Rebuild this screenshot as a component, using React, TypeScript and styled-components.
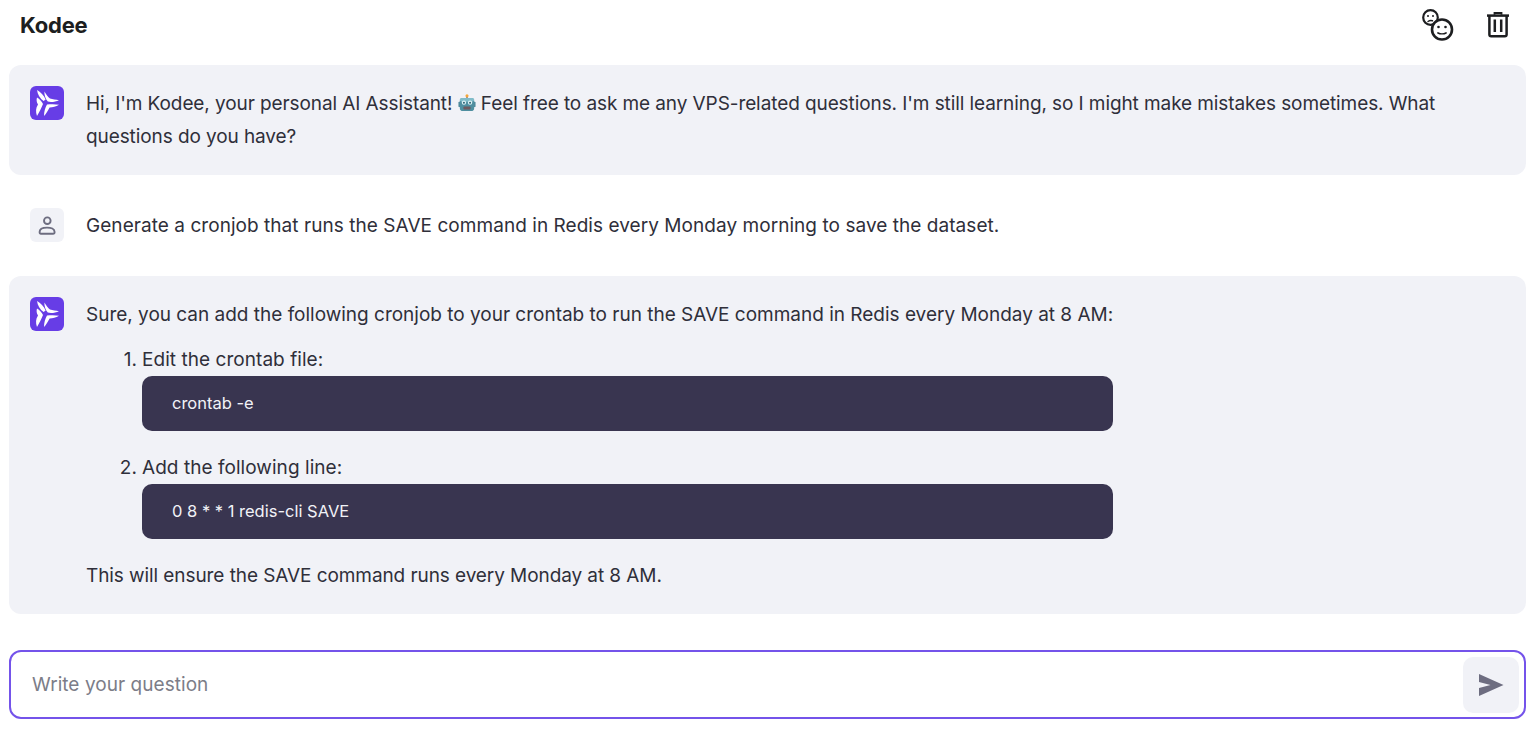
import React from "react";
import styled, { createGlobalStyle } from "styled-components";

const Global = createGlobalStyle`
  html, body { margin: 0; padding: 0; background: #fff; }
  body { font-family: "Inter", "Liberation Sans", sans-serif; color: #2f2f3a; }
`;
const Page = styled.div`
  width: 1536px; height: 734px; box-sizing: border-box; padding: 0 10px 0 9px;
  display: flex; flex-direction: column; overflow: hidden;
`;
const Header = styled.header`
  height: 65px; flex: none; box-sizing: border-box; padding: 9px 17px 15px 11px;
  display: flex; align-items: flex-start; justify-content: space-between;
`;
const Title = styled.h1`
  margin: 3px 0 0; font-size: 22px; font-weight: 700; color: #1d1e20; letter-spacing: -0.2px;
`;
const Actions = styled.div`
  display: flex; align-items: flex-start; gap: 33px; color: #1d1e20;
  & > svg:last-child { margin-top: 3px; }
`;
const Message = styled.section<{ $tinted?: boolean }>`
  display: flex; gap: 22px; align-items: flex-start; border-radius: 12px;
  padding: 21px 21px ${(p) => (p.$tinted ? "22px" : "21px")};
  background: ${(p) => (p.$tinted ? "#f1f2f7" : "transparent")};
`;
const Avatar = styled.div<{ $user?: boolean }>`
  width: 34px; height: 34px; flex: none; border-radius: 6px;
  display: flex; align-items: center; justify-content: center;
  background: ${(p) => (p.$user ? "#f1f2f7" : "#673de6")};
`;
const Body = styled.div`
  flex: 1; font-size: 19px; line-height: 33px; color: #2f2f3a; margin-top: 1px;
`;
const Para = styled.p<{ $tracking?: number }>`
  margin: 0; letter-spacing: ${(p) => p.$tracking ?? 0.05}px;
`;
const ClosingPara = styled(Para)`
  margin-top: 20px;
`;
const Steps = styled.ol`
  margin: 12px 0 0; padding: 0 0 0 56px; width: 971px; box-sizing: content-box;
  list-style: none; counter-reset: step;
`;
const Step = styled.li`
  position: relative; counter-increment: step; margin-bottom: 20px; letter-spacing: 0.05px;
  &:last-child { margin-bottom: 0; }
  &::before {
    content: counter(step) "."; position: absolute; right: 100%; margin-right: 5px;
  }
`;
const Code = styled.pre`
  margin: 0; height: 55px; box-sizing: border-box; padding: 0 30px; border-radius: 10px;
  display: flex; align-items: center;
  background: #393550; color: #f1f2f7; font-family: inherit; font-size: 16.5px; letter-spacing: 0;
`;
const Gap = styled.div<{ $h: number }>`
  height: ${(p) => p.$h}px; flex: none;
`;
const InputBox = styled.div`
  height: 69px; box-sizing: border-box; border: 2px solid #7453ea; border-radius: 12px;
  display: flex; align-items: center; justify-content: space-between; padding: 0 5px 0 21px;
`;
const Placeholder = styled.span`
  font-size: 19px; color: #7c7d88; letter-spacing: 0.05px;
`;
const Send = styled.button`
  width: 56px; height: 56px; border: 0; border-radius: 10px; background: #f1f2f7; padding: 0;
  display: flex; align-items: center; justify-content: center;
`;
const Inline = styled.svg`
  display: inline-block; vertical-align: -2px; margin: 0;
`;

const Logo = () => (
  <svg width="34" height="34" viewBox="0 0 34 34" fill="#fff">
    <path d="M7 4 C10.5 5.8 14 9.5 15.6 13.6 L13.6 15 C10 12.6 7.6 8.6 7 4Z" />
    <path d="M7 11.4 C9.6 13 12 15.5 13 18 C11.5 22 9 26.5 7 30 C5.6 26 5.6 22 8 18.6 C6.5 16 6.3 13.6 7 11.4Z" />
    <path d="M14.4 5.4 C16 8 18 10.8 20 12.6 C22.6 13.6 26 13.8 29 14.2 C25.6 15.8 21 16.4 17.8 15.6 C15.6 12.8 14.2 9 14.4 5.4Z" />
    <path d="M29 18.7 C25 18 20.5 18 17 18.6 C15.2 21.6 14 25.8 14 30 C16.2 27.6 18 24.6 19.6 21.4 C22.6 21.4 26 20.4 29 18.7Z" />
  </svg>
);

const UserIcon = () => (
  <svg width="20" height="20" viewBox="0 0 20 20" fill="none" stroke="#6d6d80" strokeWidth="1.9">
    <circle cx="10.3" cy="5.7" r="3.3" />
    <path d="M2.6 17 C2.6 14 6 12.6 10 12.6 C14 12.6 17.6 14 17.6 17 C17.6 18.4 17 18.8 16 18.8 H4 C3 18.8 2.6 18.4 2.6 17Z" />
  </svg>
);

const Faces = () => (
  <svg width="32" height="33" viewBox="0 0 32 33" fill="none" stroke="#1d1e20" strokeWidth="2.2" strokeLinecap="round">
    <circle cx="8.5" cy="8.5" r="7.3" />
    <path d="M6 12.5 C7.5 11.4 9 11.4 10.5 11.8" strokeWidth="1.4" />
    <circle cx="6" cy="7" r="1" fill="#1d1e20" stroke="none" />
    <circle cx="11" cy="7" r="1" fill="#1d1e20" stroke="none" />
    <circle cx="20" cy="20.5" r="10" fill="#fff" strokeWidth="2.6" />
    <circle cx="16.5" cy="18" r="1.3" fill="#1d1e20" stroke="none" />
    <circle cx="23.5" cy="18" r="1.3" fill="#1d1e20" stroke="none" />
    <path d="M16 24 C18 25 22 25 24 24" strokeWidth="1.7" />
  </svg>
);

const Trash = () => (
  <svg width="22" height="26" viewBox="0 0 22 26" fill="none" stroke="#1d1e20" strokeWidth="2.5">
    <path d="M0 3.6 H22" />
    <path d="M7.5 2.8 V1 H14.5 V2.8" strokeWidth="1.8" />
    <path d="M2.4 3.6 V22.4 A1.8 1.8 0 0 0 4.2 24.2 H17.8 A1.8 1.8 0 0 0 19.6 22.4 V3.6" />
    <path d="M7.8 7.5 V20 M14.2 7.5 V20" />
  </svg>
);

const Robot = () => (
  <Inline width="18" height="18" viewBox="0 0 20 20" aria-label="robot">
    <rect x="9.2" y="1.5" width="1.6" height="3" fill="#8d6e63" />
    <circle cx="10" cy="2" r="1.7" fill="#f4a63a" />
    <rect x="0.5" y="8.5" width="2.2" height="6" rx="1" fill="#4f8a9c" />
    <rect x="17.3" y="8.5" width="2.2" height="6" rx="1" fill="#4f8a9c" />
    <rect x="2" y="4.5" width="16" height="14.5" rx="3.5" fill="#4f8fa0" />
    <rect x="2" y="4.5" width="16" height="4" rx="2" fill="#80bcc9" />
    <circle cx="6.6" cy="9.6" r="2.4" fill="#dff3f6" />
    <circle cx="13.4" cy="9.6" r="2.4" fill="#dff3f6" />
    <circle cx="6.6" cy="9.6" r="1.1" fill="#2a6070" />
    <circle cx="13.4" cy="9.6" r="1.1" fill="#2a6070" />
    <rect x="6" y="14" width="8" height="3.2" rx="1" fill="#6f5a5f" />
  </Inline>
);

export default function App() {
  return (
    <Page>
      <Global />
      <Header>
        <Title>Kodee</Title>
        <Actions>
          <Faces />
          <Trash />
        </Actions>
      </Header>
      <Message $tinted>
        <Avatar><Logo /></Avatar>
        <Body>
          <Para $tracking={-0.09}>
            Hi, I'm Kodee, your personal AI Assistant! <Robot /> Feel free to ask me any VPS-related questions. I'm still learning, so I might make mistakes sometimes. What questions do you have?
          </Para>
        </Body>
      </Message>
      <Gap $h={12} />
      <Message>
        <Avatar $user><UserIcon /></Avatar>
        <Body>
          <Para>Generate a cronjob that runs the SAVE command in Redis every Monday morning to save the dataset.</Para>
        </Body>
      </Message>
      <Gap $h={13} />
      <Message $tinted>
        <Avatar><Logo /></Avatar>
        <Body>
          <Para $tracking={-0.01}>Sure, you can add the following cronjob to your crontab to run the SAVE command in Redis every Monday at 8 AM:</Para>
          <Steps>
            <Step>
              Edit the crontab file:
              <Code>crontab -e</Code>
            </Step>
            <Step>
              Add the following line:
              <Code>0 8 * * 1 redis-cli SAVE</Code>
            </Step>
          </Steps>
          <ClosingPara $tracking={-0.08}>This will ensure the SAVE command runs every Monday at 8 AM.</ClosingPara>
        </Body>
      </Message>
      <Gap $h={36} />
      <InputBox>
        <Placeholder>Write your question</Placeholder>
        <Send aria-label="Send">
          <svg width="25" height="22" viewBox="0 0 25 22" fill="#6d6d80"><path d="M0 0 L24.5 11 L0 22 L0 14 L11.5 11 L0 8Z" /></svg>
        </Send>
      </InputBox>
    </Page>
  );
}
